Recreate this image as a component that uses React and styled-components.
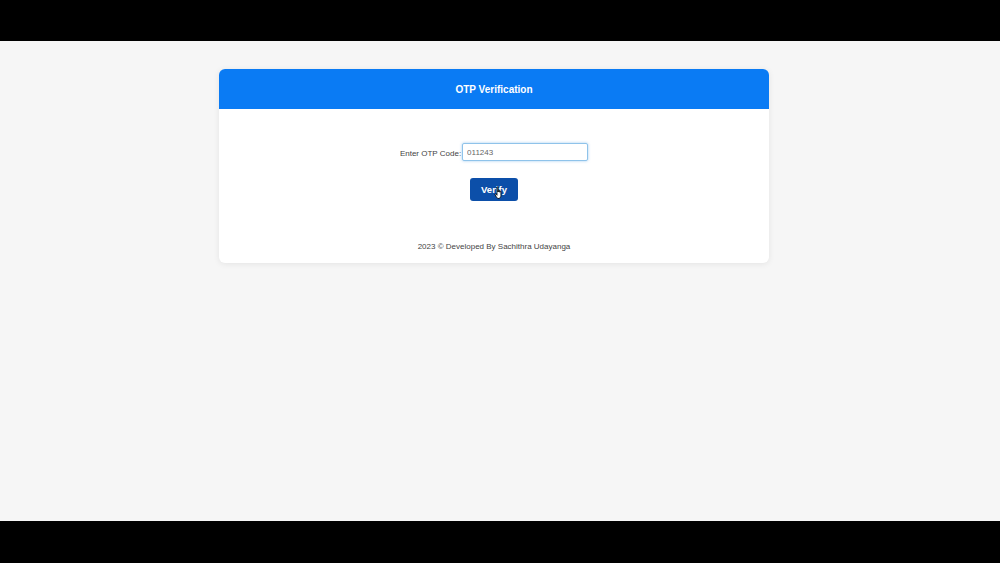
import React, { useState } from "react";
import styled, { createGlobalStyle } from "styled-components";

const GlobalStyle = createGlobalStyle`
  html, body {
    margin: 0;
    padding: 0;
    background: #000;
    font-family: "Liberation Sans", Arial, sans-serif;
  }
`;

function HandCursor() {
  return (
    <CursorIcon width="11" height="14" viewBox="0 0 11 14">
      <path
        d="M3 1.2c0-.6.9-.6.9 0V6l.1-1.4c0-.6.9-.6.9 0V6l.1-1c0-.6.9-.6.9 0V6.3l.1-.7c0-.6.9-.6.9 0v4c0 1.6-1 2.9-2.5 2.9H4.6c-.9 0-1.5-.5-2-1.2L1 8.7c-.3-.5.4-1 .8-.6L3 9.3z"
        fill="#fff"
        stroke="#000"
        strokeWidth="0.8"
        strokeLinejoin="round"
      />
    </CursorIcon>
  );
}

function App() {
  const [code, setCode] = useState("011243");
  return (
    <>
      <GlobalStyle />
      <Frame>
        <Bar />
        <Page>
          <Card>
            <CardHead>OTP Verification</CardHead>
            <CardBody>
              <Field>
                <Label htmlFor="otp">Enter OTP Code:</Label>
                <Input
                  id="otp"
                  type="text"
                  value={code}
                  onChange={(e) => setCode(e.target.value)}
                />
              </Field>
              <VerifyBtn type="button">
                Verify
                <HandCursor />
              </VerifyBtn>
              <Footer>2023 © Developed By Sachithra Udayanga</Footer>
            </CardBody>
          </Card>
        </Page>
        <Bar $bottom />
      </Frame>
    </>
  );
}

export default App;

const Frame = styled.div`
  display: flex;
  flex-direction: column;
  width: 1000px;
  height: 563px;
`;

const Bar = styled.div`
  height: ${(p) => (p.$bottom ? "42px" : "41px")};
  background: #000;
  flex-shrink: 0;
`;

const Page = styled.div`
  flex: 1;
  background: #f6f6f6;
  display: flex;
  justify-content: center;
  align-items: flex-start;
  padding-top: 28px;
  padding-right: 12px;
`;

const Card = styled.div`
  width: 550px;
  background: #fff;
  border-radius: 6px;
  box-shadow: 0 1px 6px rgba(0, 0, 0, 0.08);
  overflow: hidden;
`;

const CardHead = styled.div`
  height: 40px;
  background: #0a7bf4;
  color: #fff;
  font-weight: bold;
  font-size: 10px;
  display: flex;
  align-items: center;
  justify-content: center;
`;

const CardBody = styled.div`
  display: flex;
  flex-direction: column;
  align-items: center;
  padding: 34px 0 12px;
`;

const Field = styled.div`
  display: flex;
  align-items: center;
  gap: 1px;
`;

const Label = styled.label`
  font-size: 8px;
  color: #444;
  margin-top: 2px;
`;

const Input = styled.input`
  width: 126px;
  height: 18px;
  box-sizing: border-box;
  border: 1px solid #8fc3ea;
  border-radius: 2px;
  box-shadow: 0 0 3px rgba(100, 170, 230, 0.6);
  padding: 0 4px;
  font-family: "Liberation Sans", Arial, sans-serif;
  font-size: 8px;
  color: #666;
  outline: none;
`;

const VerifyBtn = styled.button`
  position: relative;
  margin-top: 17px;
  width: 48px;
  height: 23px;
  border: none;
  border-radius: 3px;
  background: #0c4fa9;
  color: #fff;
  font-family: "Liberation Sans", Arial, sans-serif;
  font-weight: bold;
  font-size: 9.5px;
  cursor: pointer;
`;

const CursorIcon = styled.svg`
  position: absolute;
  left: 24px;
  top: 8px;
`;

const Footer = styled.div`
  margin-top: 41px;
  font-size: 8px;
  color: #444;
`;
